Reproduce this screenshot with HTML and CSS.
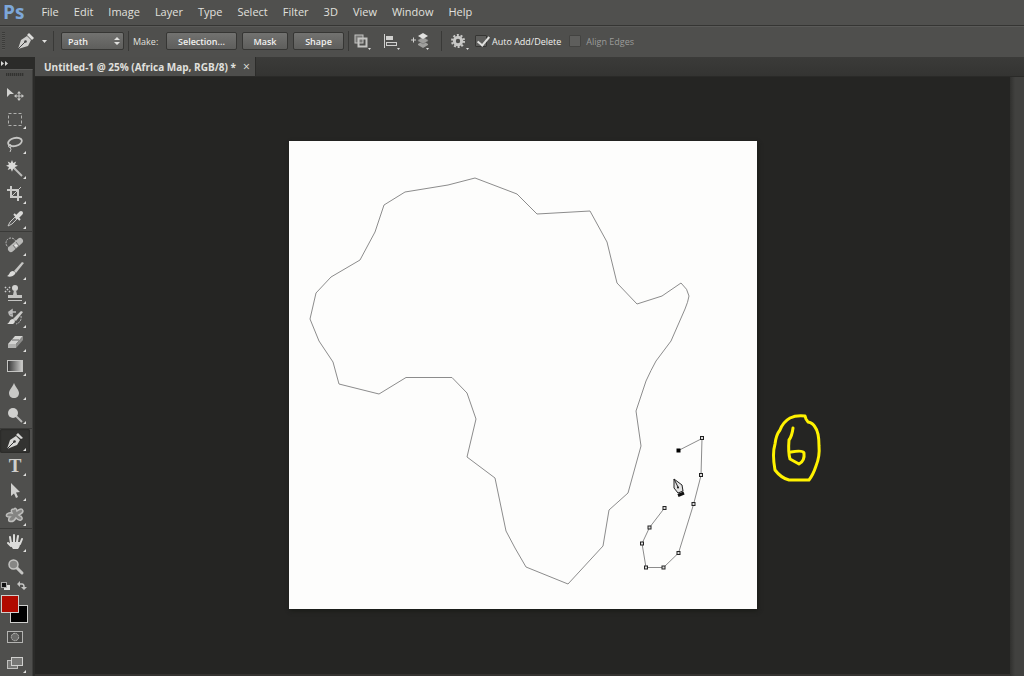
FILE: index.html
```
<!DOCTYPE html>
<html lang="en">

<head>
    <meta charset="UTF-8">
    <meta name="viewport" content="width=device-width, initial-scale=1.0">
    <title>Untitled-1 @ 25%</title>
    <link rel="stylesheet" href="styles.css">
</head>

<body>
    <div class="app">
        <nav class="menu-bar">
            <span class="logo">Ps</span>
            <button>File</button>
            <button>Edit</button>
            <button>Image</button>
            <button>Layer</button>
            <button>Type</button>
            <button>Select</button>
            <button>Filter</button>
            <button>3D</button>
            <button>View</button>
            <button>Window</button>
            <button>Help</button>
        </nav>

        <div class="options-bar">
            <span class="grip"></span>
            <button class="current-tool" aria-label="Pen tool presets">
                <svg width="32" height="18" viewBox="0 0 32 18">
                    <path d="M1 17 L4 8 L10 4 L14 8 L11 14 Z" fill="#cfcfcd" />
                    <path d="M10 3 L12 1 L17 6 L15 8 Z" fill="#dededc" />
                    <path d="M1 17 L8 10" stroke="#444" stroke-width="1" />
                    <circle cx="8.500" cy="9.500" r="1.300" fill="#444" />
                    <path d="M25 8 h5 l-2.500 3 z" fill="#e0e0de" />
                </svg>
            </button>
            <span class="divider"></span>
            <div class="mode">
                <select aria-label="Tool mode">
                    <option>Path</option>
                    <option>Shape</option>
                    <option>Pixels</option>
                </select>
                <svg width="6" height="8" viewBox="0 0 6 8">
                    <path d="M3 0 L6 3 H0 Z M0 5 H6 L3 8 Z" fill="#e0e0de" />
                </svg>
            </div>
            <span class="divider"></span>
            <span class="make">Make:</span>
            <div class="make-buttons">
                <button class="btn btn-selection">Selection...</button>
                <button class="btn btn-mask">Mask</button>
                <button class="btn btn-shape">Shape</button>
            </div>
            <span class="divider"></span>
            <div class="path-buttons">
                <button class="opt-icon" aria-label="Path operations">
                    <svg width="20" height="20" viewBox="0 0 20 20" fill="none">
                        <rect x="2" y="4" width="8" height="8" fill="#777775" stroke="#c4c4c2" />
                        <rect x="5.500" y="7.500" width="8" height="8" stroke="#c4c4c2" stroke-width="2" />
                        <path d="M15 17 h3 l-1.500 2 z" fill="#ddd" />
                    </svg>
                </button>
                <button class="opt-icon" aria-label="Path alignment">
                    <svg width="20" height="20" viewBox="0 0 20 20">
                        <path d="M2 3 h1 v14 h-1 z M4 5 h7 v4 h-7 z" fill="#d0d0ce" />
                        <rect x="4.500" y="11.500" width="10" height="3" fill="#555" stroke="#d0d0ce" />
                        <path d="M15 17 h3 l-1.500 2 z" fill="#ddd" />
                    </svg>
                </button>
                <button class="opt-icon" aria-label="Path arrangement">
                    <svg width="20" height="20" viewBox="0 0 20 20">
                        <path d="M0 9 h5 M2.500 6.500 v5" stroke="#d0d0ce" />
                        <path d="M7 13 l5 -3 l5 3 v1 l-5 3 l-5 -3 z" fill="#a0a09e" />
                        <path d="M7 9 l5 -3 l5 3 v1 l-5 3 l-5 -3 z" fill="#9c9c9a" stroke="#666" stroke-width=".5" />
                        <path d="M7 5 l5 -3 l5 3 l-5 3 z" fill="#e2e2e0" />
                        <path d="M15 17 h3 l-1.500 2 z" fill="#ddd" />
                    </svg>
                </button>
            </div>
            <span class="divider"></span>
            <button class="opt-icon gear" aria-label="Pen options">
                <svg width="20" height="20" viewBox="0 0 20 20">
                    <circle cx="8" cy="10" r="6" fill="none" stroke="#c8c8c6" stroke-width="2" stroke-dasharray="2 1.770" />
                    <circle cx="8" cy="10" r="3.700" fill="none" stroke="#c8c8c6" stroke-width="3" />
                    <path d="M16 17 h3 l-1.500 2 z" fill="#ddd" />
                </svg>
            </button>
            <label class="check"><input type="checkbox" checked>Auto Add/Delete</label>
            <label class="check off"><input type="checkbox" disabled>Align Edges</label>
        </div>

        <div class="main">
            <aside class="toolbar">
                <button class="collapse" aria-label="Collapse tools">
                    <svg width="8" height="5" viewBox="0 0 8 5">
                        <path d="M0 0 L3 2.500 L0 5 Z M4 0 L7 2.500 L4 5 Z" fill="#d8d8d6" />
                    </svg>
                </button>
                <div class="tools">
                    <span class="tools-grip"></span>

                    <div class="group spaced">
                        <button class="tool plain" aria-label="Move">
                            <svg viewBox="0 0 30 24">
                                <path d="M7 6 L14 12 L10 12 L7 15 Z" fill="#d2d2d0" />
                                <path d="M15.500 14 h7 M19 10.500 v7" stroke="#c6c6c4" />
                                <path d="M19 9 l2 2.500 h-4 z M19 19 l2 -2.500 h-4 z M14 14 l2.500 -2 v4 z M24 14 l-2.500 -2 v4 z" fill="#c6c6c4" />
                            </svg>
                        </button>
                        <button class="tool" aria-label="Rectangular Marquee">
                            <svg viewBox="0 0 30 24">
                                <rect x="8.500" y="6.500" width="13" height="12" fill="none" stroke="#b0b0ae" stroke-dasharray="3 2" />
                            </svg>
                        </button>
                        <button class="tool" aria-label="Lasso">
                            <svg viewBox="0 0 30 24" fill="none" stroke="#c6c6c4">
                                <ellipse cx="15" cy="10" rx="7" ry="4" transform="rotate(-14 15 10)" stroke-width="1.800" />
                                <circle cx="10" cy="14" r="1.500" />
                                <path d="M10 15 q2 2 0 5" />
                            </svg>
                        </button>
                        <button class="tool" aria-label="Magic Wand">
                            <svg viewBox="0 0 30 24">
                                <path d="M12 3 l1.200 3 l3 -1.500 l-1.300 3 l3 1.200 l-3 1.300 l1.300 3 l-3 -1.200 l-1.200 3 l-1.300 -3 l-3 1.200 l1.300 -3 l-3 -1.300 l3 -1.200 l-1.300 -3 l3 1.500 z" fill="#dadad8" />
                                <path d="M14 11 L22 19" stroke="#bcbcba" stroke-width="2" />
                            </svg>
                        </button>
                        <button class="tool" aria-label="Crop">
                            <svg viewBox="0 0 30 24" fill="none" stroke="#cacac8" stroke-width="2">
                                <path d="M11 4 V15 H22 M7 8 H18 V19" />
                                <path d="M12 14 L21 5" stroke-width="1" />
                            </svg>
                        </button>
                        <button class="tool" aria-label="Eyedropper">
                            <svg viewBox="0 0 30 24">
                                <path d="M8 19 L10 15 L16 9 L18 11 L12 17 Z" fill="#555" stroke="#c6c6c4" />
                                <path d="M14 7 L20 13" stroke="#dadad8" stroke-width="2" />
                                <path d="M17 10 L21 6" stroke="#dadad8" stroke-width="4" stroke-linecap="round" />
                            </svg>
                        </button>
                    </div>

                    <div class="group brushes">
                        <button class="tool" aria-label="Spot Healing Brush">
                            <svg viewBox="0 0 30 24">
                                <circle cx="11" cy="9" r="5" fill="none" stroke="#bbb" stroke-dasharray="2 1" />
                                <path d="M11 15 L20 7" stroke="#b8b8b6" stroke-width="6" stroke-linecap="round" />
                                <path d="M13 11 L16 15 M16 8 L19 12" stroke="#777" />
                                <path d="M16 10 v3 M14.500 11.500 h3" stroke="#e8e8e6" />
                            </svg>
                        </button>
                        <button class="tool" aria-label="Brush">
                            <svg viewBox="0 0 30 24">
                                <path d="M14 13 L22 4 L24 5 L16 15 Z" fill="#c6c6c4" />
                                <path d="M7 18 C10 17 9 13 13 13 C16 14 16 16 14 17 C12 19 9 19 7 18 Z" fill="#dcdcda" />
                            </svg>
                        </button>
                        <button class="tool" aria-label="Clone Stamp">
                            <svg viewBox="0 0 30 24">
                                <path d="M5 5 h1 v1 h-1 z M9 5 h1 v1 h-1 z M7 7 h1 v1 h-1 z M5 9 h1 v1 h-1 z M9 9 h1 v1 h-1 z" fill="#ccc" stroke="#ccc" stroke-width=".6" />
                                <circle cx="15" cy="6" r="3" fill="#d2d2d0" />
                                <path d="M14 8 h2 l1 5 h5 v3 H8 v-3 h5 z" fill="#c4c4c2" />
                                <path d="M8 18.500 h14" stroke="#c4c4c2" />
                            </svg>
                        </button>
                        <button class="tool" aria-label="History Brush">
                            <svg viewBox="0 0 30 24">
                                <path d="M13 13 L21 5 L23 6 L16 15 Z" fill="#ccccca" />
                                <path d="M7 18 C10 17 9 13 13 13 C16 14 15 17 13 18 Z" fill="#dcdcda" />
                                <path d="M9 6 h7 M9 6 l3 -2 v4 z M9 6 q0 4 4 4" fill="none" stroke="#bbb" stroke-width="1.500" />
                                <path d="M21 10 q1 6 -5 8" fill="none" stroke="#bbb" stroke-dasharray="2 1" />
                            </svg>
                        </button>
                        <button class="tool" aria-label="Eraser">
                            <svg viewBox="0 0 30 24">
                                <path d="M8 14 L15 6 L23 6 L16 14 Z" fill="#d4d4d2" />
                                <path d="M8 14 H16 V18 H8 Z" fill="#b2b2b0" />
                                <path d="M16 14 L23 6 V10 L16 18 Z" fill="#8c8c8a" />
                                <path d="M12 10 L19 10" stroke="#666" />
                            </svg>
                        </button>
                        <button class="tool" aria-label="Gradient">
                            <svg viewBox="0 0 30 24">
                                <defs>
                                    <linearGradient id="ramp">
                                        <stop offset="0" stop-color="#333" />
                                        <stop offset="1" stop-color="#d0d0ce" />
                                    </linearGradient>
                                </defs>
                                <rect x="7.500" y="6.500" width="15" height="11" fill="url(#ramp)" stroke="#c4c4c2" />
                            </svg>
                        </button>
                        <button class="tool" aria-label="Blur">
                            <svg viewBox="0 0 30 24">
                                <path d="M14 5 C16 10 19 12 19 15 C19 18 17 20 14 20 C11 20 9 18 9 15 C9 12 12 10 14 5 Z" fill="#c8c8c6" />
                            </svg>
                        </button>
                        <button class="tool" aria-label="Dodge">
                            <svg viewBox="0 0 30 24">
                                <path d="M15 13 L22 20" stroke="#b8b8b6" stroke-width="2" />
                                <circle cx="13" cy="11" r="5" fill="#d0d0ce" />
                            </svg>
                        </button>
                    </div>

                    <div class="group spaced">
                        <button class="tool active" aria-label="Pen">
                            <svg viewBox="0 0 30 24">
                                <path d="M7 20 L10 11 L16 7 L20 11 L17 16 Z" fill="#d8d8d6" />
                                <path d="M16 6 L18 4 L23 9 L21 10 Z" fill="#d8d8d6" />
                                <path d="M7 20 L14 13" stroke="#333" />
                                <circle cx="14.500" cy="12.500" r="1.300" fill="#333" />
                            </svg>
                        </button>
                        <button class="tool type-tool" aria-label="Horizontal Type">T</button>
                        <button class="tool" aria-label="Path Selection">
                            <svg viewBox="0 0 30 24">
                                <path d="M11 4 L20 13 L16 13.500 L18 18 L16 19 L14 14.500 L11 17 Z" fill="#d0d0ce" />
                            </svg>
                        </button>
                        <button class="tool" aria-label="Custom Shape">
                            <svg viewBox="0 0 30 24">
                                <path d="M14 5 Q16 3 17 7 Q22 3 23 7 Q23 9 19 11 Q24 14 21 16 Q19 17 16 14 Q13 19 9 17 Q8 15 10 13 Q5 13 7 10 Q9 8 12 9 Q10 5 14 5 Z" fill="#858583" stroke="#bebebc" stroke-width="1.500" />
                            </svg>
                        </button>
                    </div>

                    <div class="group spaced hands">
                        <button class="tool" aria-label="Hand">
                            <svg viewBox="0 0 30 24" fill="none" stroke="#dcdcda" stroke-width="2" stroke-linecap="round">
                                <path d="M11 13 L10 7 M14 12 V5 M17 12 L18 6 M20 14 L22 9 M11 16 L8 13" />
                                <path d="M10 12 H20.500 Q20 17 18 19 H13 Q12 17 10 15 Z" fill="#dcdcda" stroke="none" />
                            </svg>
                        </button>
                        <button class="tool plain" aria-label="Zoom">
                            <svg viewBox="0 0 30 24">
                                <path d="M17 13 L22 18" stroke="#c4c4c2" stroke-width="3" stroke-linecap="round" />
                                <circle cx="13.500" cy="9.500" r="4.500" fill="#868684" stroke="#c4c4c2" stroke-width="1.500" />
                            </svg>
                        </button>
                    </div>

                    <div class="color-actions">
                        <button aria-label="Default colors">
                            <svg width="10" height="10" viewBox="0 0 10 10">
                                <rect x="4" y="4" width="6" height="5" fill="#dededc" />
                                <rect x="1.500" y="1.500" width="5" height="5" fill="#111" stroke="#aaa" />
                            </svg>
                        </button>
                        <button aria-label="Switch colors">
                            <svg width="10" height="10" viewBox="0 0 10 10">
                                <path d="M2 3 H5 Q7 3 7 6" fill="none" stroke="#c4c4c2" stroke-width="1.500" />
                                <path d="M0 3 l3 -3 v6 z M4 6 h6 l-3 3 z" fill="#c4c4c2" />
                            </svg>
                        </button>
                    </div>
                    <div class="swatches">
                        <button class="swatch background" aria-label="Background color"></button>
                        <button class="swatch foreground" aria-label="Foreground color"></button>
                    </div>

                    <button class="tool plain" aria-label="Quick Mask">
                        <svg viewBox="0 0 30 24">
                            <rect x="7.500" y="6.500" width="15" height="11" fill="#484846" stroke="#b4b4b2" />
                            <circle cx="15" cy="12" r="3.700" fill="#6a6a68" stroke="#b4b4b2" stroke-dasharray="2 .5" />
                        </svg>
                    </button>
                    <button class="tool screen-mode" aria-label="Screen Mode">
                        <svg viewBox="0 0 30 24">
                            <rect x="7.500" y="9.500" width="10" height="8" fill="#777775" stroke="#c0c0be" />
                            <rect x="11.500" y="6.500" width="11" height="8" fill="#777775" stroke="#d0d0ce" />
                        </svg>
                    </button>
                </div>
            </aside>

            <section class="editor">
                <div class="tabs">
                    <div class="tab">
                        <span>Untitled-1 @ 25% (Africa Map, RGB/8) *</span>
                        <button class="close" aria-label="Close">×</button>
                    </div>
                </div>
                <div class="workspace">
                    <div class="canvas-area">
                        <div class="document">
                            <svg class="paths" viewBox="0 0 468 468">
                                <!-- mainland -->
                                <path class="outline" d="M186 37 L228 53 L248 73 L301 70 L318 101 L328 142 L348 163 L373 155 L392 142 Q399 148 400 155 Q399 161 396 168 L382 200 L367 220 Q362 229 357 240 L347 270 L352 305 L339 352 L320 369 L314 405 L279 443 L237 426 Q225 406 217 390 L206 337 L178 316 L187 278 L178 252 L163 236.500 L117 236.500 L90 253 L50 243 L44 221 L30 200 L21 178 L27 152 L42 136 L71 119 L86 91 L95 64 L116 51 L159 44 Z" />
                                <!-- island, still open -->
                                <path class="outline" d="M389.500 309.500 L413 297.500 L412 334.500 L404.500 363.500 L389.500 412 L374.500 426.500 L357 426.500 L353 402.500 L360.500 386.500 L375.500 367" />
                                <g class="anchors">
                                    <rect class="selected" x="388" y="308" width="3" height="3" />
                                    <rect x="411.500" y="295.500" width="3" height="3" />
                                    <rect x="410.500" y="332.500" width="3" height="3" />
                                    <rect x="403" y="361.500" width="3" height="3" />
                                    <rect x="388" y="410.500" width="3" height="3" />
                                    <rect x="373" y="425" width="3" height="3" />
                                    <rect x="355.500" y="425" width="3" height="3" />
                                    <rect x="351.500" y="401" width="3" height="3" />
                                    <rect x="359" y="385" width="3" height="3" />
                                    <rect x="374" y="365.500" width="3" height="3" />
                                </g>
                                <!-- pen cursor -->
                                <g>
                                    <path d="M385 338 L393 344 L394 350 L389 352 L385 347 Z" fill="#e4e4e4" stroke="#222" stroke-width="1" />
                                    <path d="M385 338 L389 346" stroke="#222" stroke-width="1" />
                                    <circle cx="389" cy="346.500" r="1" fill="#111" />
                                    <path d="M389 354.500 L395 352" stroke="#111" stroke-width="3" />
                                </g>
                            </svg>
                            <svg class="step" viewBox="0 0 60 72" role="img" aria-label="Step 6">
                                <path d="M41 7 L40 4 Q31 3 25 6 Q18 10 15 18 Q11 23 10 32 Q7 42 10 58 Q16 66 24 68 H44 Q48 63 51 54 Q55 44 54 34 Q54 20 50 15 Q48 11 43 10 Z" />
                                <path d="M28 16 Q27 24 24 28 Q23 40 25 47 L34 52 Q40 49 39 41 Q38 38 26 40" />
                            </svg>
                        </div>
                    </div>
                    <div class="scrollbar"></div>
                </div>
            </section>
        </div>
    </div>
</body>

</html>
```
FILE: styles.css
```
* {
    box-sizing: border-box;
}

body {
    font-family: "Open Sans", "Noto Sans", sans-serif;
    margin: 0;
    background: #252523;
    color: #e0e0de;
}

button {
    margin: 0;
    padding: 0;
    border: none;
    background: none;
    color: inherit;
    font-family: inherit;
}

svg {
    display: block;
}

.app {
    display: flex;
    flex-direction: column;
    min-height: 100vh;
}

/* menu */
.menu-bar {
    display: flex;
    align-items: center;
    gap: 15px;
    height: 26px;
    padding: 0 0 2px 3px;
    background: #50504e;
    border-bottom: 1px solid #353533;
}

.menu-bar button {
    font-size: 11px;
    line-height: 22px;
}

.logo {
    margin-right: 2px;
    color: #7da7d9;
    font-size: 19px;
    font-weight: bold;
    line-height: 22px;
}

/* options */
.options-bar {
    display: flex;
    align-items: center;
    height: 31px;
    padding: 0 0 2px 2px;
    background: #4f4f4d;
    border-top: 1px solid #5a5a58;
    font-size: 9px;
}

.grip {
    width: 3px;
    height: 18px;
    background: repeating-linear-gradient(#3c3c3a 0 1px, #555553 1px 2px);
}

.current-tool {
    margin: 0 4px 0 12px;
}

.divider {
    width: 1px;
    height: 20px;
    background: #393937;
}

.mode {
    position: relative;
    margin: 0 4px 0 7px;
}

.mode select {
    appearance: none;
    display: block;
    width: 63px;
    height: 18px;
    padding: 0 6px;
    border: 1px solid #363634;
    border-radius: 2px;
    background: linear-gradient(#727270, #5e5e5c);
    color: #f0f0ee;
    font-family: inherit;
    font-size: 9px;
    font-weight: 600;
}

.mode svg {
    position: absolute;
    top: 5px;
    right: 4px;
    pointer-events: none;
}

.make {
    width: 33px;
    margin-left: 4px;
}

.make-buttons {
    display: flex;
    gap: 5px;
    margin-right: 4px;
}

.btn {
    height: 18px;
    border: 1px solid #363634;
    border-radius: 2px;
    background: linear-gradient(#727270, #5e5e5c);
    color: #f0f0ee;
    font-size: 9px;
    font-weight: 600;
}

.btn-selection {
    width: 71px;
}

.btn-mask {
    width: 46px;
}

.btn-shape {
    width: 51px;
}

.path-buttons {
    display: flex;
    gap: 9px;
    margin: 0 10px 0 4px;
}

.gear {
    margin: 0 5px 0 8px;
}

.check {
    display: flex;
    align-items: center;
    gap: 5px;
    margin-right: 8px;
    color: #f0f0ee;
    white-space: nowrap;
}

.check input {
    appearance: none;
    position: relative;
    width: 12px;
    height: 12px;
    margin: 0;
    border: 1px solid #353533;
    border-radius: 1px;
    background: #5e5e5c;
}

.check input:checked::after {
    content: "";
    position: absolute;
    left: 4px;
    top: -2px;
    width: 5px;
    height: 10px;
    border: solid #e0e0de;
    border-width: 0 2px 2px 0;
    transform: rotate(40deg);
}

.check.off {
    color: #9c9c9a;
}

.check.off input {
    border-color: #434341;
}

/* toolbar */
.main {
    display: flex;
    flex: 1;
}

.toolbar {
    display: flex;
    flex-direction: column;
    width: 35px;
    background: #2b2b29;
}

.collapse {
    height: 12px;
    padding-left: 1px;
}

.tools {
    flex: 1;
    width: 33px;
    background: #4f4f4d;
    border-top: 1px solid #5c5c5a;
    border-right: 1px solid #3e3e3c;
}

.tools-grip {
    display: block;
    width: 18px;
    height: 3px;
    margin: 3px 0 6px 6px;
    background: repeating-linear-gradient(90deg, #333331 0 1px, #454543 1px 2px);
}

.group {
    display: flex;
    flex-direction: column;
}

.spaced {
    gap: 1px;
}

.group + .group {
    border-top: 1px solid #3a3a38;
}

.brushes {
    padding: 2px 0;
}

.hands {
    padding-top: 1px;
}

.tool {
    display: block;
    position: relative;
    width: 30px;
    height: 24px;
}

.tool svg {
    width: 30px;
    height: 24px;
}

.tool::after {
    content: "";
    position: absolute;
    left: 23px;
    bottom: 2px;
    border: solid transparent;
    border-width: 0 0 3px 3px;
    border-bottom-color: #e0e0de;
}

.tool.plain::after {
    display: none;
}

.tool.active {
    background: #333331;
    border-radius: 2px;
    box-shadow: inset 0 0 2px #1c1c1a;
}

.type-tool {
    color: #cececc;
    font-family: "Liberation Serif", serif;
    font-size: 19px;
    font-weight: bold;
    line-height: 24px;
}

.color-actions {
    display: flex;
    gap: 7px;
    padding: 2px 0 4px;
}

.swatches {
    position: relative;
    width: 27px;
    height: 28px;
    margin: 0 0 2px 1px;
}

.swatch {
    position: absolute;
    width: 18px;
    height: 18px;
    border: 1px solid #cfcfcd;
}

.foreground {
    left: 0;
    top: 0;
    background: #b00a00;
}

.background {
    right: 0;
    bottom: 0;
    background: #000;
}

.screen-mode {
    margin-top: 2px;
}

/* editor */
.editor {
    display: flex;
    flex: 1;
    flex-direction: column;
}

.tabs {
    display: flex;
    height: 20px;
    background: linear-gradient(#3b3b39, #343432);
    border-bottom: 1px solid #2a2a28;
}

.tab {
    display: flex;
    align-items: center;
    gap: 7px;
    padding: 0 5px 0 9px;
    background: #4e4e4c;
    border-right: 1px solid #2c2c2a;
    font-size: 10px;
    font-weight: bold;
    white-space: nowrap;
}

.close {
    font-size: 12px;
    line-height: 18px;
}

.workspace {
    display: flex;
    flex: 1;
}

.canvas-area {
    display: flex;
    flex: 1;
    align-items: center;
    justify-content: center;
    padding: 16px 16px 18px;
    border-bottom: 2px solid #343230;
}

.document {
    position: relative;
    width: 468px;
    background: #fdfdfc;
    box-shadow: 1px 2px 4px #1a1c18;
}

.outline {
    fill: none;
    stroke: #8c8c8c;
    stroke-width: 1;
}

.anchors rect {
    fill: #ddd;
    stroke: #222;
    stroke-width: 1;
}

.anchors .selected {
    fill: #000;
    stroke: #000;
}

.step {
    position: absolute;
    left: 476px;
    top: 271px;
    width: 60px;
    height: 72px;
    fill: none;
    stroke: #fff200;
    stroke-width: 3;
    stroke-linecap: round;
    stroke-linejoin: round;
}

.scrollbar {
    width: 14px;
    background: linear-gradient(90deg, #30302e, #41413f 5px);
}
```
